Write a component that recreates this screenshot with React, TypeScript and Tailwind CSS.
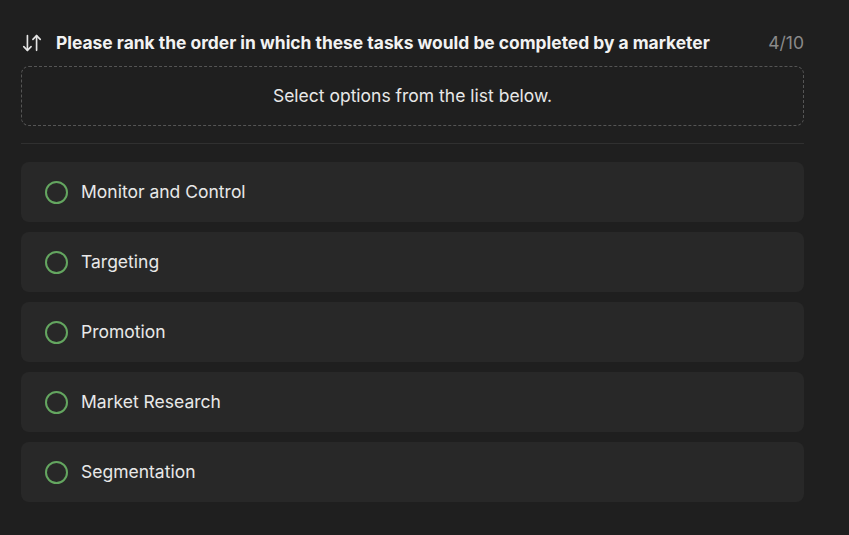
import { ArrowDownUp } from 'lucide-react';

const options = ['Monitor and Control', 'Targeting', 'Promotion', 'Market Research', 'Segmentation'];

export default function App() {
  return (
    <div className="min-h-screen bg-[#1f1f1f] font-['Inter',sans-serif] text-[#ececec]">
      <div className="ml-[21px] w-[783px] pt-[31px]">
        {/* Question header */}
        <div className="flex h-6 items-center justify-between">
          <div className="flex items-center">
            <ArrowDownUp size={22} strokeWidth={1.8} className="text-[#e5e5e5]" />
            <span className="ml-[13px] text-[17.4px] font-bold text-[#f2f2f2]">
              Please rank the order in which these tasks would be completed by a marketer
            </span>
          </div>
          <span className="text-[17.5px] text-[#8a8a8a]">4/10</span>
        </div>

        {/* Drop zone */}
        <div className="mt-[11px] flex h-[60px] items-center justify-center rounded-lg border border-dashed border-[#555555]">
          <span className="text-[17.5px] text-[#e8e8e8]">Select options from the list below.</span>
        </div>

        <div className="mt-[17px] h-px bg-[#303030]" />

        {/* Options */}
        <div className="mt-[18px] flex flex-col gap-[10px]">
          {options.map((opt) => (
            <div key={opt} className="flex h-[60px] items-center rounded-lg bg-[#282828] pl-6">
              <div className="h-[23px] w-[23px] rounded-full border-2 border-[#64a660]" />
              <span className="ml-[13px] pt-px text-[17.5px] text-[#e8e8e8]">{opt}</span>
            </div>
          ))}
        </div>
      </div>
    </div>
  );
}
